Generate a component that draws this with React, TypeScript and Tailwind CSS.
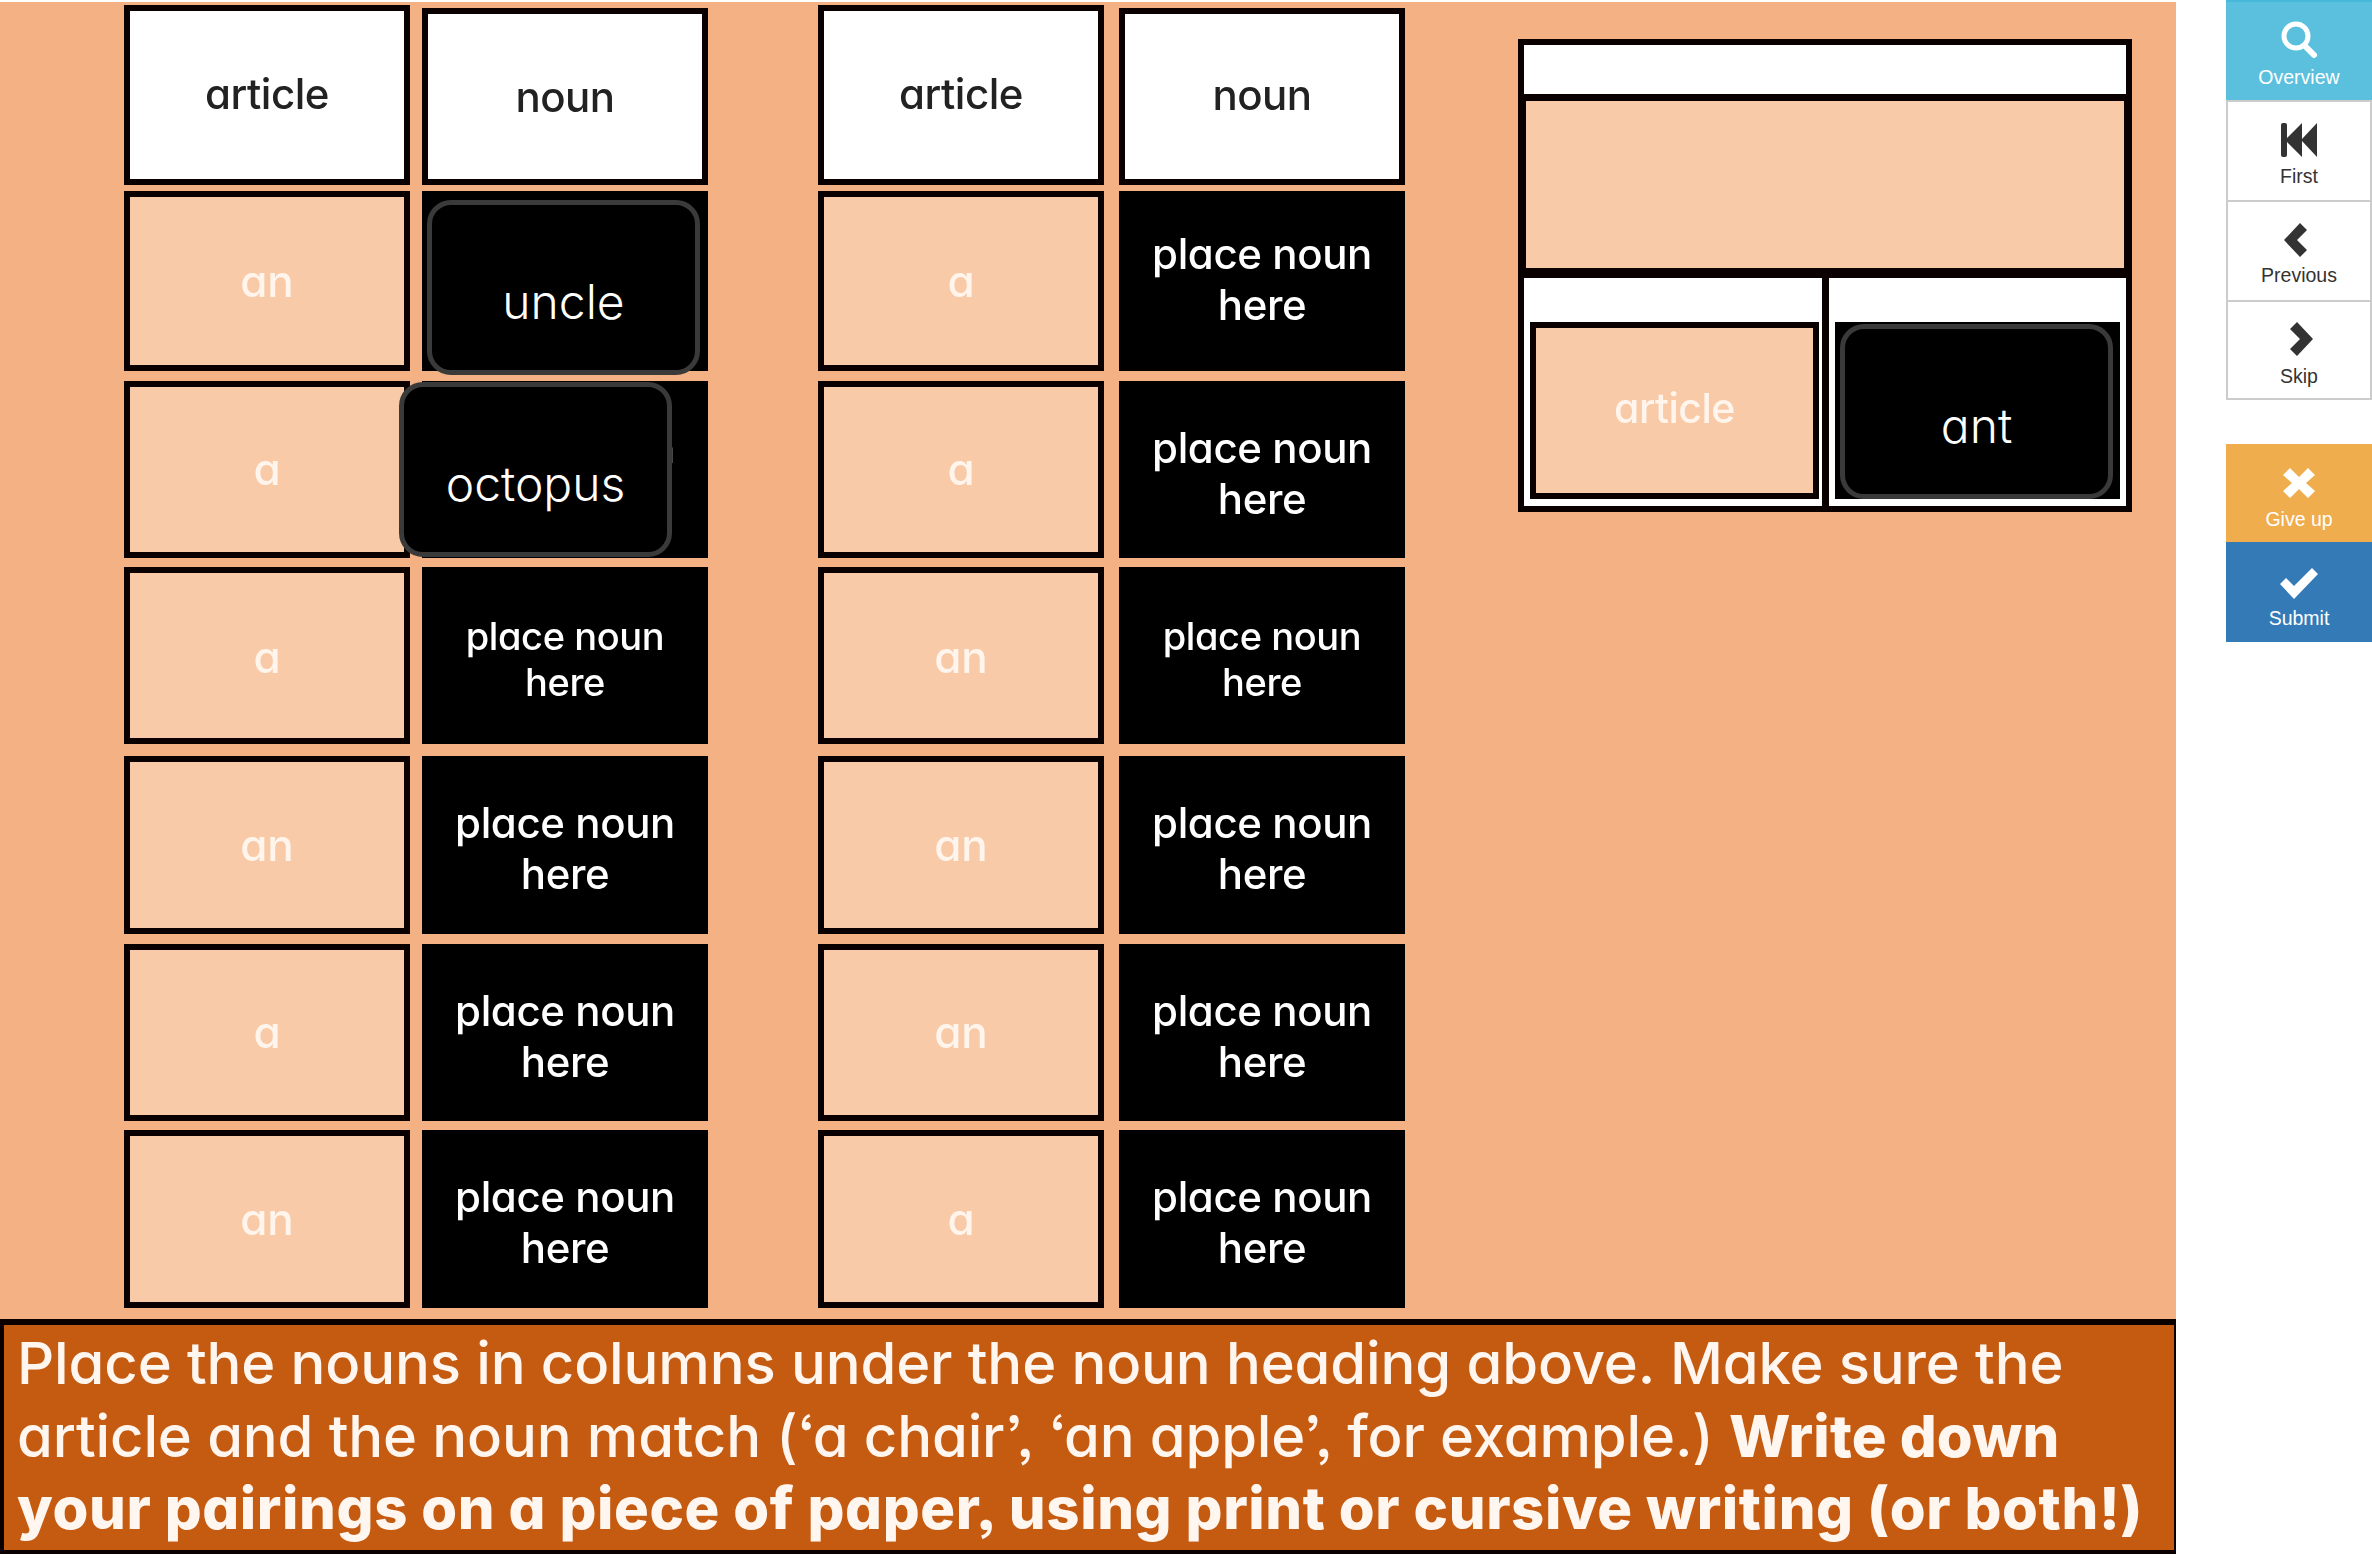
import React from "react";

const font = "font-['Inter',sans-serif] [font-feature-settings:'cv11','ss03']";

function Peach({ label, low = false }: { label: string; low?: boolean }) {
  return (
    <div className={`flex h-full w-[286px] items-center justify-center border-[6px] border-[#0a0000] bg-[#f8caa8] ${low ? "pt-[3px]" : "pb-[1px]"}`}>
      <span className={`${font} text-[44px] leading-[56px] font-medium text-[#fff5ec] blur-[0.6px]`}>{label}</span>
    </div>
  );
}

function Head({ label, extra = "" }: { label: string; extra?: string }) {
  return (
    <div className={`flex w-[286px] items-center justify-center border-[6px] border-[#0a0000] bg-white ${extra}`}>
      <span className={`${font} text-[42px] tracking-[-0.5px] font-medium text-[#222] blur-[0.6px]`}>{label}</span>
    </div>
  );
}

function Slot({ small = false, first = false, children }: { small?: boolean; first?: boolean; children?: React.ReactNode }) {
  return (
    <div className={`relative flex h-full w-[286px] items-center justify-center bg-black text-center ${first ? "pb-[4px]" : "pt-[6px]"}`}>
      <span
        className={`${font} font-medium text-white blur-[0.6px] ${
          small ? "text-[38px] leading-[46px] tracking-[-0.4px]" : "text-[42px] leading-[51px] tracking-[-0.4px]"
        }`}
      >
        place noun
        <br />
        here
      </span>
      {children}
    </div>
  );
}

function Card({ label, className }: { label: string; className: string }) {
  return (
    <div
      className={`flex h-[175px] w-[273px] items-center justify-center rounded-[24px] border-[5px] border-[#3a3a3a] bg-black pt-[29px] ${className}`}
    >
      <span className={`${font} text-[48px] font-light leading-[56px] text-white`}>{label}</span>
    </div>
  );
}

const rowSizes = [
  "mt-[6px] h-[180px]",
  "mt-[10px] h-[177px]",
  "mt-[9px] h-[177px]",
  "mt-[12px] h-[178px]",
  "mt-[10px] h-[177px]",
  "mt-[9px] h-[178px]",
];

const left = ["an", "a", "a", "an", "a", "an"];
const right = ["a", "a", "an", "an", "an", "a"];

function Glyph({ d }: { d: string }) {
  return (
    <svg viewBox="0 0 38 38" className="h-[38px] w-[38px]" fill="currentColor" aria-hidden="true">
      <path d={d} />
    </svg>
  );
}

function SideButton({
  label,
  icon,
  className,
  labelClass = "",
}: {
  label: string;
  icon: React.ReactNode;
  className: string;
  labelClass?: string;
}) {
  return (
    <div className={`flex w-[146px] flex-col items-center ${className}`}>
      <div className="flex h-[38px] w-[38px] items-center justify-center">{icon}</div>
      <span className={`mt-[5px] font-['Liberation_Sans',sans-serif] text-[19.5px] leading-[22px] ${labelClass}`}>{label}</span>
    </div>
  );
}

export default function App() {
  return (
    <div className="flex h-[1558px] w-[2372px] overflow-hidden bg-white">
      <main className="mt-[2px] flex h-[1552px] w-[2176px] flex-col bg-[#f4b183]">
        <div className="flex h-[1317px] items-start pl-[124px]">
          <div className="mt-[3px] flex w-[584px] flex-col">
            <div className="flex h-[180px] gap-[12px]">
              <Head label="article" extra="pb-[3px]" />
              <Head label="noun" extra="mt-[3px]" />
            </div>
            {left.map((l, i) => (
              <div key={i} className={`flex gap-[12px] ${rowSizes[i]}`}>
                <Peach label={l} low={i === 2} />
                <Slot small={i === 2} first={i === 0}>
                  {i === 0 && <Card label="uncle" className="absolute left-[5px] top-[9px] z-10" />}
                  {i === 1 && <Card label="octopus" className="absolute left-[-23px] top-[1px] z-10" />}
                </Slot>
              </div>
            ))}
          </div>
          <div className="ml-[110px] mt-[3px] flex w-[587px] flex-col">
            <div className="flex h-[180px] gap-[15px]">
              <Head label="article" extra="pb-[3px]" />
              <Head label="noun" extra="mt-[3px] pb-[4px]" />
            </div>
            {right.map((l, i) => (
              <div key={i} className={`flex gap-[15px] ${rowSizes[i]}`}>
                <Peach label={l} low={i === 2} />
                <Slot small={i === 2} first={i === 0} />
              </div>
            ))}
          </div>
          <section className="ml-[113px] mt-[37px] flex h-[473px] w-[614px] flex-col border-[6px] border-[#0a0000] bg-white">
            <div className="h-[49px] shrink-0" />
            <div className="h-[184px] shrink-0 border-x-[2px] border-b-[10px] border-t-[7px] border-[#0a0000] bg-[#f8caa8]" />
            <div className="flex flex-1">
              <div className="w-[298px] pl-[6px] pr-[3px] pt-[44px]">
                <div className="flex h-[177px] items-center justify-center border-[6px] border-[#0a0000] bg-[#f8caa8] pb-[3px]">
                  <span className={`${font} text-[41px] tracking-[-0.5px] font-medium text-[#fff5ec] blur-[0.6px]`}>article</span>
                </div>
              </div>
              <div className="w-[7px] bg-[#0a0000]" />
              <div className="flex-1 pl-[6px] pr-[6px] pt-[44px]">
                <div className="relative h-[177px] bg-black">
                  <Card label="ant" className="absolute left-[5px] top-[2px]" />
                </div>
              </div>
            </div>
          </section>
        </div>
        <div className="h-[235px] w-[2176px] whitespace-nowrap border-b-[4px] border-l-[4px] border-r-[2px] border-t-[6px] border-[#0a0000] bg-[#c55a11] pl-[13px] pt-[2px] text-[#fff6ef]">
          <div className={`${font} text-[58px] font-medium leading-[72.5px] tracking-[-0.13px] blur-[0.7px]`}>
            Place the nouns in columns under the noun heading above. Make sure the
          </div>
          <div className={`${font} text-[58px] font-medium leading-[72.5px] tracking-[-0.14px] blur-[0.7px]`}>
            article and the noun match (‘a chair’, ‘an apple’, for example.){" "}
            <b className="font-extrabold tracking-[0.2px]">Write down</b>
          </div>
          <div className={`${font} text-[58px] font-extrabold leading-[72.5px] tracking-[0.6px] blur-[0.7px]`}>
            your pairings on a piece of paper, using print or cursive writing (or both!)
          </div>
        </div>
      </main>
      <aside className="ml-[50px] flex w-[146px] flex-col">
        <SideButton
          label="Overview"
          className="h-[100px] border-t-[2px] border-[#46b8da] bg-[#5bc0de] pt-[19px] text-white"
          labelClass="mt-[7px]"
          icon={
            <svg viewBox="0 0 38 38" className="h-[38px] w-[38px]" aria-hidden="true">
              <circle cx="16" cy="15" r="12" fill="none" stroke="currentColor" strokeWidth="5" />
              <path d="M25 25 L34 34" stroke="currentColor" strokeWidth="6" strokeLinecap="round" />
            </svg>
          }
        />
        <SideButton
          label="First"
          className="h-[100px] border-x-[2px] border-t-[2px] border-[#ccc] bg-white pt-[20px] text-[#333]"
          labelClass="mt-[4px]"
          icon={<Glyph d="M1 3 Q1 1 3 1 L5 1 Q7 1 7 3 L7 16 L22 1 L22 17 L37 1 L37 35 L22 19 L22 35 L7 20 L7 33 Q7 35 5 35 L3 35 Q1 35 1 33 Z" />}
        />
        <SideButton
          label="Previous"
          className="h-[100px] border-x-[2px] border-t-[2px] border-[#ccc] bg-white pt-[19px] text-[#333]"
          icon={<Glyph d="M20 2 L27 9 L17 19 L27 29 L20 36 L4 19 Z" />}
        />
        <SideButton
          label="Skip"
          className="h-[100px] border-x-[2px] border-y-[2px] border-[#ccc] bg-white pt-[18px] text-[#333]"
          labelClass="mt-[7px]"
          icon={<Glyph d="M17 2 L10 9 L20 19 L10 29 L17 36 L33 19 Z" />}
        />
        <SideButton
          label="Give up"
          className="mt-[44px] h-[98px] bg-[#f0ad4e] pt-[20px] text-white"
          labelClass="mt-[6px]"
          icon={<Glyph d="M10 4 L19 13 L28 4 L35 11 L26 19 L35 27 L28 34 L19 25 L10 34 L3 27 L12 19 L3 11 Z" />}
        />
        <SideButton
          label="Submit"
          className="h-[100px] bg-[#337ab7] pt-[22px] text-white"
          icon={<Glyph d="M0 20 L6 14 L14 22 L32 4 L38 10 L14 35 Z" />}
        />
      </aside>
    </div>
  );
}
